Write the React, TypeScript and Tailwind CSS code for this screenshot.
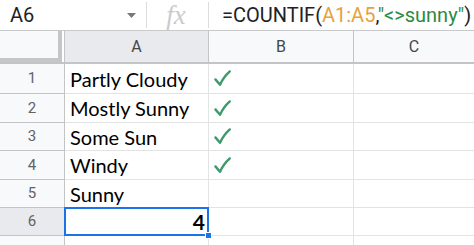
import React from 'react'

const rows = [
  { n: 1, text: 'Partly Cloudy', check: true, h: 'h-[30px]' },
  { n: 2, text: 'Mostly Sunny', check: true, h: 'h-[29px]' },
  { n: 3, text: 'Some Sun', check: true, h: 'h-[28px]' },
  { n: 4, text: 'Windy', check: true, h: 'h-[29px]' },
  { n: 5, text: 'Sunny', check: false, h: 'h-[28px]' },
]

function Check() {
  return (
    <svg width="19" height="19" viewBox="0 0 19 19" className="ml-[4px]">
      <path
        d="M2.4 10.4 L7 15.8 Q10.5 8 16.8 2.4"
        fill="none"
        stroke="#3d9a6c"
        strokeWidth="2.4"
        strokeLinecap="round"
        strokeLinejoin="round"
      />
    </svg>
  )
}

export default function App() {
  return (
    <div className="w-[474px] h-[245px] overflow-hidden bg-white font-['Roboto',sans-serif]">
      {/* formula bar */}
      <div className="flex h-[31px] items-center border-b border-[#c8c9ca]">
        <div className="w-[146px] flex items-center pl-[10px] pr-[10px]">
          <span className="text-[20px] text-[#202124] flex-1">A6</span>
          <svg width="9" height="5" viewBox="0 0 9 5">
            <path d="M0 0 L9 0 L4.5 5 Z" fill="#75797d" />
          </svg>
        </div>
        <div className="w-px h-[26px] bg-[#dadce0]" />
        <div className="w-[61px] h-[30px] flex items-center justify-center">
          <span className="font-['Liberation_Serif',serif] italic text-[27px] leading-[30px] pr-[3px] text-[#c9cbcd]">fx</span>
        </div>
        <div className="w-px h-[26px] bg-[#dadce0]" />
        <div className="pl-[13px] text-[20px] text-[#202124] whitespace-nowrap">
          =COUNTIF(<span className="text-[#e8a23c]">A1:A5</span>,<span className="text-[#2e8b3e]">"&lt;&gt;sunny"</span>)
        </div>
      </div>

      {/* grid */}
      <div className="grid grid-cols-[65px_144px_145px_1fr]">
        {/* header row */}
        <div className="h-[33px] border-r border-b-2 border-[#c4c4c4] bg-white">
          <div className="w-[62px] h-[31px] bg-[#f8f9fa] border-r-4 border-b-4 border-[#c4c7c5]" />
        </div>
        <div className="h-[33px] border-r border-b-2 border-[#c4c4c4] bg-[#e8eaed] flex items-center justify-center text-[16px] text-[#444746]">A</div>
        <div className="h-[33px] border-r border-b-2 border-[#c4c4c4] bg-[#f8f9fa] flex items-center justify-center text-[16px] text-[#444746]">B</div>
        <div className="h-[33px] border-b-2 border-[#c4c4c4] bg-[#f8f9fa] flex items-center justify-center text-[16px] text-[#444746]">C</div>

        {rows.map((r) => (
          <React.Fragment key={r.n}>
            <div className={`${r.h} border-r border-b border-[#c4c4c4] bg-[#f8f9fa] flex items-center justify-center text-[15px] text-[#5f6368]`}>{r.n}</div>
            <div className={`${r.h} border-r border-b border-[#e2e3e3] flex items-center pl-[5px] font-['Lato',sans-serif] text-[20px] text-black`}>{r.text}</div>
            <div className={`${r.h} border-r border-b border-[#e2e3e3] flex items-center`}>{r.check && <Check />}</div>
            <div className={`${r.h} border-b border-[#e2e3e3]`} />
          </React.Fragment>
        ))}

        {/* selected row 6 */}
        <div className="h-[28px] border-r border-b border-[#c4c4c4] bg-[#e8eaed] flex items-center justify-center text-[15px] text-[#5f6368]">6</div>
        <div className="h-[28px] border-r border-b border-[#e2e3e3] relative">
          <div className="absolute -left-px -top-px -right-px -bottom-px border-2 border-[#1a73e8] flex items-center justify-end pr-[2px]">
            <span className="font-['Lato',sans-serif] font-bold text-[21px] text-black leading-none">4</span>
          </div>
          <div className="absolute -right-[4px] -bottom-[4px] w-[7px] h-[7px] bg-[#1a73e8] border border-white" />
        </div>
        <div className="h-[28px] border-r border-b border-[#e2e3e3]" />
        <div className="h-[28px] border-b border-[#e2e3e3]" />

        {/* partial row 7 */}
        <div className="h-[20px] border-r border-[#c4c4c4] bg-[#f8f9fa]" />
        <div className="h-[20px] border-r border-[#e2e3e3]" />
        <div className="h-[20px] border-r border-[#e2e3e3]" />
        <div className="h-[20px]" />
      </div>
    </div>
  )
}
